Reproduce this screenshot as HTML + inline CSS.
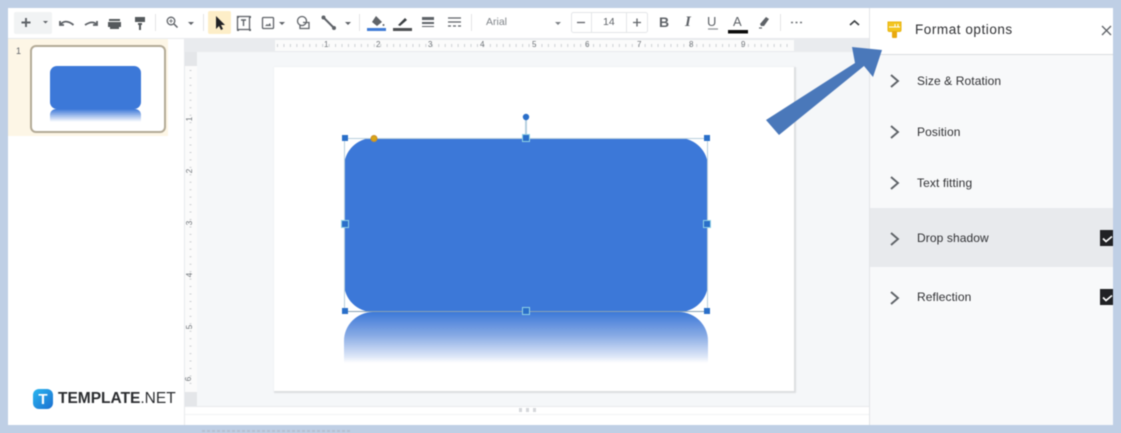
<!DOCTYPE html>
<html><head><meta charset="utf-8">
<style>
html,body{margin:0;padding:0;background:#bfcfe5;}
#r{position:relative;width:1121px;height:433px;overflow:hidden;background:#bfcfe5;font-family:"Liberation Sans",sans-serif;filter:blur(.4px);}
.a{position:absolute;}
.t{position:absolute;white-space:nowrap;line-height:1;}
.rowt{position:absolute;left:917px;font-size:12px;color:#303134;letter-spacing:.1px;line-height:14px;}
svg{position:absolute;left:0;top:0;}
.rn{position:absolute;font-size:8px;color:#70757a;line-height:1;}
.h{position:absolute;width:6px;height:6px;background:#2a6fc9;}
.ho{position:absolute;width:6px;height:6px;background:#2a6fc9;border:1px solid #8fd0e6;}
</style></head><body><div id="r">
<div class="a" style="left:8px;top:8px;width:1105px;height:417px;background:#fff;"></div>
<!-- toolbar -->
<div class="a" style="left:14px;top:12px;width:38px;height:22px;background:#f1f3f4;border-radius:2px;"></div>
<div class="a" style="left:208px;top:11px;width:23px;height:23px;background:#fdeec8;border-radius:2px;"></div>
<div class="a" style="left:8px;top:38px;width:861px;height:1px;background:#e8eaed;"></div>
<!-- filmstrip -->
<div class="a" style="left:8px;top:39px;width:160px;height:97px;background:#fdf6e6;"></div>
<div class="t" style="left:16px;top:47px;font-size:9px;color:#5f6368;">1</div>
<div class="a" style="left:30px;top:45px;width:132px;height:84px;background:#fff;border:2px solid #b3aa96;border-radius:6px;"></div>
<div class="a" style="left:50px;top:66px;width:91px;height:43px;background:#3c78d8;border-radius:7px;"></div>
<div class="a" style="left:50px;top:109px;width:91px;height:13px;background:linear-gradient(#3c78d8,#fff);border-radius:6px 6px 0 0;"></div>
<div class="a" style="left:184px;top:39px;width:1px;height:386px;background:#e8eaed;"></div>
<!-- rulers -->
<div class="a" style="left:185px;top:39px;width:684px;height:13px;background:#e9ebee;"></div>
<div class="a" style="left:275px;top:40px;width:519px;height:11px;background:#fbfbfb;"></div>
<div class="a" style="left:185px;top:52px;width:12px;height:14px;background:#e4e6e9;"></div>
<div class="a" style="left:185px;top:66px;width:12px;height:326px;background:#fbfbfb;"></div>
<div class="a" style="left:185px;top:392px;width:12px;height:14px;background:#e4e6e9;"></div>
<div class="a" style="left:197px;top:52px;width:672px;height:354px;background:#f5f7f9;"></div>
<div class="a" style="left:185px;top:406px;width:684px;height:1px;background:#e8eaed;"></div>
<div class="a" style="left:185px;top:414px;width:684px;height:1px;background:#f1f3f4;"></div>
<!-- ruler ticks -->
<svg width="1121" height="433">
<line x1="277" y1="45.5" x2="792" y2="45.5" stroke="#cdd0d3" stroke-width="3" stroke-dasharray="1 5.45"/>
<line x1="190.5" y1="70" x2="190.5" y2="390" stroke="#cdd0d3" stroke-width="2" stroke-dasharray="1 6.45"/>
</svg>
<div class="rn" style="left:324px;top:41px;">1</div><div class="rn" style="left:376px;top:41px;">2</div><div class="rn" style="left:428px;top:41px;">3</div><div class="rn" style="left:480px;top:41px;">4</div><div class="rn" style="left:532px;top:41px;">5</div><div class="rn" style="left:585px;top:41px;">6</div><div class="rn" style="left:637px;top:41px;">7</div><div class="rn" style="left:689px;top:41px;">8</div><div class="rn" style="left:741px;top:41px;">9</div>
<div class="rn" style="left:188px;top:115px;transform:rotate(-90deg);">1</div><div class="rn" style="left:188px;top:167px;transform:rotate(-90deg);">2</div><div class="rn" style="left:188px;top:219px;transform:rotate(-90deg);">3</div><div class="rn" style="left:188px;top:271px;transform:rotate(-90deg);">4</div><div class="rn" style="left:188px;top:323px;transform:rotate(-90deg);">5</div><div class="rn" style="left:187px;top:375px;transform:rotate(-90deg);">6</div>
<!-- slide -->
<div class="a" style="left:274px;top:67px;width:520px;height:324px;background:#fff;box-shadow:1px 1px 1px 1px #dcdee0;"></div>
<div class="a" style="left:344px;top:138px;width:364px;height:174px;background:#3c78d8;border-radius:29px;"></div>
<div class="a" style="left:344px;top:312px;width:364px;height:51px;background:linear-gradient(#3c78d8 0%,#86a9e4 45%,#dfe8f8 88%,#fff 100%);border-radius:29px 29px 0 0;"></div>
<svg width="1121" height="433">
<path d="M344.500 311V138.500H706.500" fill="none" stroke="#b9cfdc" stroke-width="1"/>
<path d="M707.500 138V311" fill="none" stroke="#b9cfdc" stroke-width="1"/>
<line x1="344" y1="311.500" x2="707" y2="311.500" stroke="#8aa3b4" stroke-width="1"/>
<line x1="526" y1="118" x2="526" y2="136" stroke="#b4cfe0" stroke-width="2"/>
<circle cx="526" cy="117" r="3.200" fill="#2a6fc9"/>
<circle cx="374" cy="138.500" r="3" fill="#d9a514" stroke="#c98f2d" stroke-width="1"/>
</svg>
<div class="h" style="left:342px;top:135px;"></div>
<div class="ho" style="left:522px;top:134px;"></div>
<div class="h" style="left:704px;top:135px;"></div>
<div class="ho" style="left:341px;top:220px;"></div>
<div class="ho" style="left:703px;top:220px;"></div>
<div class="h" style="left:342px;top:308px;"></div>
<div class="ho" style="left:522px;top:307px;"></div>
<div class="h" style="left:704px;top:308px;"></div>
<!-- toolbar icons -->
<svg width="1121" height="433" fill="none" stroke="#5f6368">
<path d="M26 18v9M21.500 22.500h9" stroke-width="1.900"/>
<path d="M43 21h5l-2.500 2.500z" fill="#5f6368" stroke="none"/>
<path d="M60 21v4h4M60.500 25c2-4 7-5 13 0" stroke-width="1.800"/>
<path d="M97 21v4h-4M97 25c-2-3-6-4-12 0" stroke-width="1.800"/>
<path d="M109 19h11v2h-11zM108 22h13v5h-2v2h-9v-2h-2z" fill="#55595d" stroke="none"/>
<path d="M135 17h10v5h-10zM138 23h4v2h-1v5h-2v-5h-1z" fill="#55595d" stroke="none"/>
<line x1="155.500" y1="14" x2="155.500" y2="31" stroke="#e3e4e6"/>
<circle cx="171" cy="21" r="3.800" stroke-width="1.300"/><path d="M174 24l3.500 3.500" stroke-width="1.500"/><path d="M169 21h4M171 19v4" stroke-width=".8"/>
<path d="M188 22h6l-3 3z" fill="#5f6368" stroke="none"/>
<line x1="203.500" y1="14" x2="203.500" y2="31" stroke="#e3e4e6"/>
<path d="M216 16v13l3-3 2 4 2-1-2-4h4z" fill="#202124" stroke="none"/>
<rect x="237.500" y="16.500" width="12" height="13" stroke-width="1.300"/><path d="M241 20h5M243.500 20v6" stroke-width="1.400"/>
<rect x="237" y="16" width="2" height="2" fill="#5f6368" stroke="none"/><rect x="249" y="16" width="2" height="2" fill="#5f6368" stroke="none"/><rect x="237" y="29" width="2" height="2" fill="#5f6368" stroke="none"/><rect x="249" y="29" width="2" height="2" fill="#5f6368" stroke="none"/>
<rect x="262.500" y="17.500" width="11" height="11" rx="1" stroke-width="1.300"/><path d="M265 26l2-2 1 1 2-2 1 3z" fill="#5f6368" stroke="none"/>
<path d="M279 22h6l-3 3z" fill="#5f6368" stroke="none"/>
<circle cx="302" cy="21" r="4.500" stroke-width="1.300"/><path d="M303 22.500h6v6h-9v-3" stroke-width="1.300"/>
<path d="M324 18l10 10" stroke-width="2"/><circle cx="323.500" cy="17.500" r="1.500" fill="#5f6368"/><circle cx="334" cy="28" r="1.500" fill="#5f6368"/>
<path d="M345 22h6l-3 3z" fill="#5f6368" stroke="none"/>
<line x1="359.500" y1="14" x2="359.500" y2="31" stroke="#e3e4e6"/>
<path d="M376 16l6 6-5 4-5-4z" fill="#5f6368" stroke="none"/><circle cx="383.500" cy="25" r="1" fill="#5f6368" stroke="none"/>
<rect x="367" y="28" width="19" height="3" fill="#3f7bd6" stroke="none"/>
<path d="M398 25l7-7 2 2-7 6z" fill="#3c4043" stroke="none"/>
<rect x="393" y="28" width="19" height="3" fill="#4d4f52" stroke="none"/>
<path d="M422 17h12v3h-12zM422 22h12v2h-12zM422 26h12v1h-12z" fill="#5f6368" stroke="none"/>
<path d="M448 18h13M448 22h13M448 26h3M453 26h3M458 26h3" stroke-width="1.200"/>
<line x1="471.500" y1="14" x2="471.500" y2="31" stroke="#e3e4e6"/>
<path d="M555 22h6l-3 3z" fill="#7d8185" stroke="none"/>
<rect x="571.500" y="12.500" width="76" height="20" rx="2" stroke="#e4e6e8"/>
<path d="M591.500 13v19M626.500 13v19" stroke="#e4e6e8"/>
<path d="M577 22.500h8" stroke-width="1.300"/>
<path d="M633 22.500h8M637 18.500v8" stroke-width="1.300"/>
<path d="M708 29h10" stroke="#8d9094" stroke-width="1.200"/>
<rect x="728" y="30" width="20" height="3.500" fill="#0b0b0b" stroke="none"/>
<path d="M760 24l6-7 3 2-5 7h-3z" fill="#5f6368" stroke="none"/><path d="M759 28h3" stroke-width="1.200"/>
<line x1="780.500" y1="14" x2="780.500" y2="31" stroke="#e3e4e6"/>
<path d="M791 22.500h2M795.500 22.500h2M800 22.500h2" stroke="#6d7175" stroke-width="1.500"/>
<path d="M850 25l4.500-4 4.500 4" stroke="#3c4043" stroke-width="1.600"/>
</svg>
<div class="t" style="left:486px;top:17px;font-size:10.500px;color:#80858a;">Arial</div>
<div class="t" style="left:603px;top:17px;font-size:10.500px;color:#5f6368;">14</div>
<div class="t" style="left:659px;top:15px;font-size:14px;font-weight:bold;color:#5f6368;">B</div>
<div class="t" style="left:685px;top:15px;font-size:15px;font-style:italic;font-family:'Liberation Serif',serif;font-weight:bold;color:#5f6368;">I</div>
<div class="t" style="left:707px;top:15px;font-size:13px;color:#5f6368;">U</div>
<div class="t" style="left:733px;top:15px;font-size:13px;color:#5f6368;">A</div>
<!-- right panel -->
<div class="a" style="left:869px;top:8px;width:1px;height:417px;background:#e3e5e8;"></div>
<div class="a" style="left:870px;top:8px;width:243px;height:46px;background:#fff;"></div>
<div class="a" style="left:870px;top:54px;width:243px;height:1px;background:#dadce0;"></div>
<div class="a" style="left:870px;top:55px;width:243px;height:370px;background:#f8f9fa;"></div>
<div class="a" style="left:870px;top:208px;width:243px;height:59px;background:#e8eaed;"></div>
<svg width="1121" height="433" fill="none">
<path d="M888 22h13v8a1.500 1.500 0 0 1-1.500 1.500h-10a1.500 1.500 0 0 1-1.500-1.500z" fill="#f3c51f" stroke="#e8b40f"/>
<rect x="892" y="31" width="5" height="7" rx="1" fill="#e8a90f"/>
<path d="M889 27h11" stroke="#fff" stroke-width="1"/><path d="M895 24v3M898 24v3" stroke="#fff" stroke-width="1"/>
<path d="M1102 26l9 9M1111 26l-9 9" stroke="#5f6368" stroke-width="1.300"/>
<path d="M891 75l7 6-7 6M891 126l7 6-7 6M891 177l7 6-7 6M891 233l7 6-7 6M891 292l7 6-7 6" stroke="#5f6368" stroke-width="1.900"/>
<rect x="1100" y="230" width="13" height="16" fill="#202124"/>
<rect x="1100" y="289" width="13" height="16" fill="#202124"/>
<path d="M1103 238.500l3 3 6-5M1103 297.500l3 3 6-5" stroke="#fff" stroke-width="1.600"/>
</svg>
<div class="t" style="left:915px;top:23px;font-size:13.500px;color:#303134;letter-spacing:.55px;">Format options</div>
<div class="rowt" style="top:74px;">Size &amp; Rotation</div>
<div class="rowt" style="top:125px;">Position</div>
<div class="rowt" style="top:176px;">Text fitting</div>
<div class="rowt" style="top:231px;">Drop shadow</div>
<div class="rowt" style="top:290px;">Reflection</div>
<!-- arrow -->
<svg width="1121" height="433">
<path d="M852 47L882 50L873 77L864 66L779 135L766 120L855 63Z" fill="#4a78ba"/>
</svg>
<!-- grip dots -->
<svg width="1121" height="433"><path d="M519 408h3v4h-3zM526 408h3v4h-3zM533 408h3v4h-3z" fill="#d5d7da"/>
<path d="M202 431H350" stroke="#a9aeb5" stroke-width="2" stroke-dasharray="3 2" opacity=".45"/></svg>
<!-- logo -->
<div class="a" style="left:33px;top:389px;width:20px;height:20px;background:linear-gradient(135deg,#29b6f0,#1c6fd0);border-radius:6px;"></div>
<div class="t" style="left:37px;top:392px;width:12px;text-align:center;font-size:15px;font-weight:bold;color:#fff;">T</div>
<div class="t" style="left:58px;top:391px;font-size:15.500px;font-weight:bold;color:#2b2d30;">TEMPLATE<span style="font-weight:normal;">.NET</span></div>
</div></body></html>
